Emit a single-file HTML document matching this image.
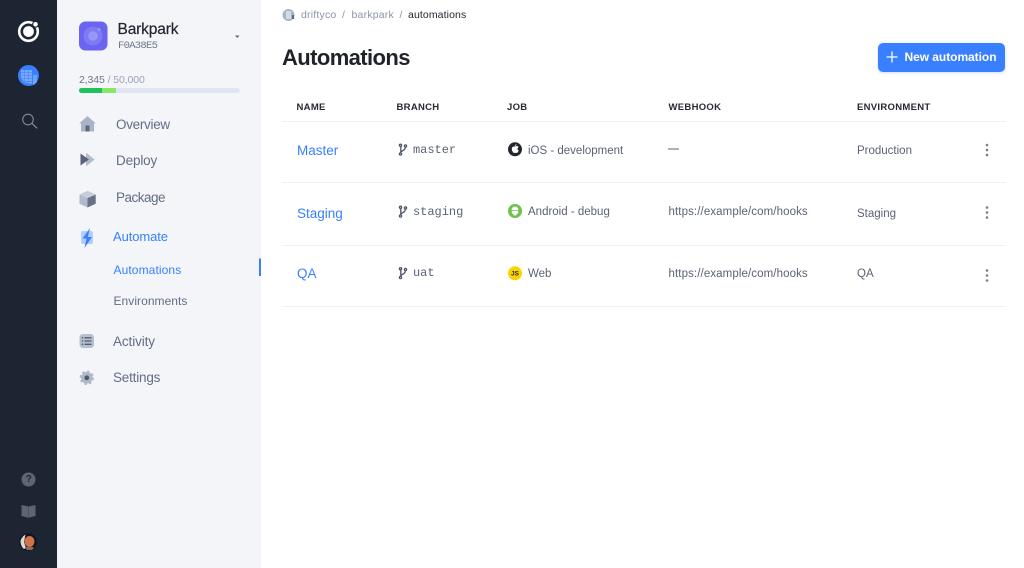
<!DOCTYPE html>
<html lang="en">
<head>
<meta charset="utf-8">
<title>Automations</title>
<style>
html,body{margin:0;padding:0;width:1024px;height:568px;overflow:hidden;background:#fff;font-family:"Liberation Sans",sans-serif;}
.t{position:absolute;white-space:nowrap;line-height:1;}
.a{position:absolute;}
.nav{font-size:13.5px;color:#646d85;}
.blue{color:#3880ff;}
.th{font-size:9.5px;font-weight:700;color:#272a33;letter-spacing:.3px;}
.nm{font-size:13.5px;color:#3880ff;letter-spacing:0;}
.td{font-size:11.5px;color:#5b6274;letter-spacing:0;}
.url{letter-spacing:.1px;}
.mono{font-family:"Liberation Mono",monospace;font-size:12px;color:#5b6274;letter-spacing:-.02px;}
.ln{position:absolute;left:282px;width:724px;height:1px;background:#eef0f6;}
</style>
</head>
<body>
<div class="a" style="left:0;top:0;width:57px;height:568px;background:#1e2532;"></div>
<div class="a" style="left:57px;top:0;width:204px;height:568px;background:#f3f5f9;"></div>

<svg class="a" style="left:0;top:0" width="261" height="568" viewBox="0 0 261 568">
  <!-- logo -->
  <circle cx="28.500" cy="31.500" r="9.300" fill="none" stroke="#fff" stroke-width="2.600"/>
  <circle cx="28.500" cy="31.500" r="5.400" fill="#fff"/>
  <circle cx="35.500" cy="24.300" r="3.400" fill="#1e2532"/>
  <circle cx="35.500" cy="24.300" r="2.300" fill="#fff"/>
  <!-- org -->
  <circle cx="28.500" cy="75.500" r="10.500" fill="#3880ff"/>
  <path d="M21 70h11v13.500a10.500 10.500 0 0 1-11-6z" fill="#76a9ff"/>
  <path d="M33 75h4v7l-2.500 2.500-1.500.5z" fill="#6ba3ff"/>
  <path d="M21.500 72.500h10.500M21.500 75.500h10.500M21.500 78.500h10.500M21.500 81.500h10.500M24.500 70v14M28.500 70v14" stroke="#4f8df5" stroke-width=".8"/>
  <!-- search -->
  <circle cx="28" cy="119.500" r="5.300" fill="none" stroke="#7f8899" stroke-width="1.100"/>
  <path d="M32 123.500l4.800 4.500" stroke="#7f8899" stroke-width="1.200" stroke-linecap="round"/>
  <!-- help -->
  <circle cx="28.500" cy="479.500" r="7" fill="#5d6472"/>
  <!-- book -->
  <path d="M21.500 505l7 1.500 7-1.500v11l-7 1.800-7-1.800z" fill="#5d6472"/>
  <path d="M28.500 506.500v11.300" stroke="#444b59" stroke-width=".6"/>
  <!-- avatar -->
  <circle cx="28" cy="542" r="8.800" fill="#10141c"/>
  <path d="M20.500 541c1-3 2.500-5 5-6.500l-1.500 7.500 2 6-2 1c-2.500-2-3.500-5-3.500-8z" fill="#dcdad8"/>
  <ellipse cx="29.500" cy="541.500" rx="5" ry="5.500" fill="#d0724a"/>
  <path d="M25 547.500c2-1 7-1 9 0l-2 2.500h-5z" fill="#8a6a60"/>

  <!-- app icon -->
  <rect x="79" y="21.500" width="28.500" height="29" rx="6.500" fill="#6a64f1"/>
  <circle cx="93" cy="36" r="9.500" fill="#7e79f5"/>
  <circle cx="93" cy="36" r="4.800" fill="#9a96f8"/>
  <circle cx="99" cy="29.500" r="1.500" fill="#9a96f8"/>
  <path d="M235 35.500h4.500l-2.250 2.500z" fill="#5f6675"/>

  <!-- progress -->
  <rect x="79" y="88" width="160.500" height="5" rx="2.500" fill="#dfe5f2"/>
  <path d="M116 88h-34.500a2.500 2.500 0 0 0 0 5H116z" fill="#86e866"/>
  <path d="M102 88H81.500a2.500 2.500 0 0 0 0 5H102z" fill="#1fc25a"/>

  <!-- overview -->
  <path d="M87.500 116l8.300 7.500h-1.800v8H81v-8h-1.800z" fill="#aab4c6"/>
  <rect x="85.500" y="125.500" width="4" height="6" fill="#5e6678"/>
  <!-- deploy -->
  <path d="M86 153h.5l8.200 6.500-8.200 6.500H86z" fill="#b4bdcd"/>
  <path d="M80.500 153.500l8.500 6-8.500 6z" fill="#5c6479"/>
  <!-- package -->
  <path d="M79.500 194.500l8 3.500v9.500l-8-3.700z" fill="#b0bacb"/>
  <path d="M87.500 198l8.200-3.500v9.300l-8.200 3.700z" fill="#687186"/>
  <path d="M79.500 194.500l8.200-3.700 8 3.700-8.200 3.500z" fill="#c5cdda"/>
  <!-- automate -->
  <rect x="81" y="231" width="12" height="13" rx="2" fill="#b2cefc"/>
  <path d="M90 228l-7.500 10.500h4L84.500 248l7.500-11h-4.200z" fill="#3880ff"/>
  <!-- activity -->
  <rect x="79.500" y="334" width="14.500" height="14" rx="3.500" fill="#b6bfcf"/>
  <path d="M84.500 337.800h7M84.500 341h7M84.500 344.300h7" stroke="#555d71" stroke-width="1.300"/>
  <path d="M81.700 337.800h1.500M81.700 341h1.500M81.700 344.300h1.500" stroke="#555d71" stroke-width="1.300"/>
  <!-- settings -->
  <circle cx="86.800" cy="377.800" r="6.300" fill="none" stroke="#aeb8c9" stroke-width="1.800" stroke-dasharray="2.500 2.450"/>
  <circle cx="86.800" cy="377.800" r="5.800" fill="#aeb8c9"/>
  <circle cx="86.800" cy="377.800" r="2.400" fill="#4f5769"/>
  <!-- active bar -->
  <rect x="259" y="258.500" width="2" height="17.500" fill="#3880ff"/>
</svg>

<div class="t" style="left:117.500px;top:22px;font-size:15.500px;color:#23262f;letter-spacing:-.15px;-webkit-text-stroke:.2px #23262f;">Barkpark</div>
<div class="t" style="left:118px;top:40.500px;font-family:'Liberation Mono',monospace;font-size:10.500px;color:#6f7789;letter-spacing:-.7px;">F0A38E5</div>
<div class="t" style="left:79px;top:74.500px;font-size:10.500px;color:#9aa2b3;letter-spacing:-.1px;"><span style="color:#6f7789">2,345</span> / 50,000</div>

<div class="t nav" style="left:116px;top:118px;letter-spacing:-.3px;">Overview</div>
<div class="t nav" style="left:116px;top:154px;letter-spacing:-.15px;">Deploy</div>
<div class="t nav" style="left:116px;top:191px;letter-spacing:-.5px;">Package</div>
<div class="t nav blue" style="left:113px;top:230px;font-size:13px;letter-spacing:-.1px;">Automate</div>
<div class="t blue" style="left:113.500px;top:263.500px;font-size:12px;letter-spacing:.1px;">Automations</div>
<div class="t" style="left:113.500px;top:295px;font-size:12px;color:#646d85;letter-spacing:.05px;">Environments</div>
<div class="t nav" style="left:113px;top:335px;letter-spacing:-.1px;">Activity</div>
<div class="t nav" style="left:113px;top:371px;letter-spacing:-.2px;">Settings</div>

<!-- help mark -->
<div class="t" style="left:25.700px;top:474.500px;font-size:10px;font-weight:700;color:#1e2532;">?</div>

<!-- breadcrumb -->
<svg class="a" style="left:282px;top:8px" width="14" height="14" viewBox="0 0 14 14">
  <circle cx="6.500" cy="7" r="6" fill="#a9b4c8"/>
  <rect x="4" y="3" width="5" height="8" fill="#d4dae6"/>
  <rect x="10" y="7" width="2" height="4" fill="#5d6579"/>
</svg>
<div class="t" style="left:301px;top:9.500px;font-size:10.500px;color:#8c94a8;letter-spacing:.2px;">driftyco</div>
<div class="t" style="left:342px;top:9.500px;font-size:10.500px;color:#8c94a8;">/</div>
<div class="t" style="left:351.500px;top:9.500px;font-size:10.500px;color:#8c94a8;letter-spacing:.2px;">barkpark</div>
<div class="t" style="left:399.500px;top:9.500px;font-size:10.500px;color:#8c94a8;">/</div>
<div class="t" style="left:408px;top:9.500px;font-size:10.500px;color:#23262f;letter-spacing:.1px;">automations</div>

<div class="t" style="left:282px;top:47px;font-size:22px;font-weight:700;color:#1f2229;letter-spacing:-.6px;">Automations</div>

<!-- button -->
<div class="a" style="left:878px;top:42.500px;width:127px;height:29px;border-radius:5px;background:#3880ff;box-shadow:0 1px 3px rgba(56,128,255,.25);"></div>
<svg class="a" style="left:886px;top:51px" width="12" height="12" viewBox="0 0 12 12"><path d="M6 .5v11M.5 6h11" stroke="#fff" stroke-width="1.300"/></svg>
<div class="t" style="left:904.500px;top:51px;font-size:12px;font-weight:700;color:#fff;letter-spacing:-.05px;">New automation</div>

<!-- table head -->
<div class="t th" style="left:296.500px;top:102.500px;">NAME</div>
<div class="t th" style="left:396.500px;top:102.500px;">BRANCH</div>
<div class="t th" style="left:507px;top:102.500px;">JOB</div>
<div class="t th" style="left:668.500px;top:102.500px;">WEBHOOK</div>
<div class="t th" style="left:857px;top:102.500px;">ENVIRONMENT</div>
<div class="ln" style="top:120.500px;"></div>
<div class="ln" style="top:182px;"></div>
<div class="ln" style="top:245px;"></div>
<div class="ln" style="top:305.500px;"></div>

<!-- row 1 -->
<div class="t nm" style="left:297px;top:144px;">Master</div>
<div class="t mono" style="left:413px;top:143.500px;">master</div>
<svg class="a" style="left:505px;top:139px" width="20" height="20" viewBox="0 0 20 20">
  <circle cx="10" cy="10.300" r="7" fill="#23262f"/>
  <path d="M10 7.500c1-.6 2.800-.8 3.500.6-1.500 1-1.200 2.800.2 3.400-.5 1.300-1.400 2.700-2.300 2.500-.7-.2-1-.3-1.500-.1-1 .4-1.900-.4-2.600-1.900-.8-1.800-.5-3.800.9-4.400.7-.3 1.300 0 1.800-.1zM10 7c0-1 .7-1.800 1.500-1.900 0 1-.6 1.800-1.500 1.900z" fill="#fff"/>
</svg>
<div class="t td" style="left:528px;top:145.500px;">iOS - development</div>
<div class="a" style="left:668px;top:148px;width:10.500px;height:2px;background:#aab2c2;"></div>
<div class="t td" style="left:857px;top:145.500px;">Production</div>

<!-- row 2 -->
<div class="t nm" style="left:297px;top:206.500px;">Staging</div>
<div class="t mono" style="left:413px;top:205.500px;">staging</div>
<svg class="a" style="left:505px;top:201px" width="20" height="20" viewBox="0 0 20 20">
  <circle cx="10" cy="10" r="7" fill="#6cc24a"/>
  <path d="M6.500 9a3.500 3.500 0 0 1 7 0z" fill="#fff"/>
  <path d="M6.800 9.700h6.400v2.500l-1.700 1v1.200h-3v-1.200l-1.700-1z" fill="#fff"/>
</svg>
<div class="t td" style="left:528px;top:207px;">Android - debug</div>
<div class="t td url" style="left:668.500px;top:207px;">https://example/com/hooks</div>
<div class="t td" style="left:857px;top:209px;">Staging</div>

<!-- row 3 -->
<div class="t nm" style="left:297px;top:266.500px;">QA</div>
<div class="t mono" style="left:413px;top:267px;">uat</div>
<svg class="a" style="left:505px;top:262.500px" width="20" height="20" viewBox="0 0 20 20">
  <circle cx="10" cy="10.300" r="7" fill="#fbd400"/>
  <text x="10" y="12.600" font-family="Liberation Sans" font-size="6.500" font-weight="700" text-anchor="middle" fill="#23262f">JS</text>
</svg>
<div class="t td" style="left:528px;top:268.500px;">Web</div>
<div class="t td url" style="left:668.500px;top:268.500px;">https://example/com/hooks</div>
<div class="t td" style="left:857px;top:268.500px;">QA</div>

<!-- branch icons + kebabs -->
<svg class="a" style="left:0;top:0" width="1024" height="568" viewBox="0 0 1024 568">
  <g fill="none" stroke="#4d5466" stroke-width="1.300">
    <circle cx="400.500" cy="145.300" r="1.100"/>
    <circle cx="405.500" cy="146" r="1.100"/>
    <circle cx="400.500" cy="154" r="1.100"/>
    <path d="M400.800 146.500v6.500M405.300 147.200c0 2.600-2 3.300-4.500 4.600"/>
  </g>
  <g fill="none" stroke="#4d5466" stroke-width="1.300" transform="translate(0 62)">
    <circle cx="400.500" cy="145.300" r="1.100"/>
    <circle cx="405.500" cy="146" r="1.100"/>
    <circle cx="400.500" cy="154" r="1.100"/>
    <path d="M400.800 146.500v6.500M405.300 147.200c0 2.600-2 3.300-4.500 4.600"/>
  </g>
  <g fill="none" stroke="#4d5466" stroke-width="1.300" transform="translate(0 123.500)">
    <circle cx="400.500" cy="145.300" r="1.100"/>
    <circle cx="405.500" cy="146" r="1.100"/>
    <circle cx="400.500" cy="154" r="1.100"/>
    <path d="M400.800 146.500v6.500M405.300 147.200c0 2.600-2 3.300-4.500 4.600"/>
  </g>
  <g fill="#757d90">
    <circle cx="987" cy="145" r="1.300"/><circle cx="987" cy="150" r="1.300"/><circle cx="987" cy="155" r="1.300"/>
    <circle cx="987" cy="207.500" r="1.300"/><circle cx="987" cy="212.500" r="1.300"/><circle cx="987" cy="217.500" r="1.300"/>
    <circle cx="987" cy="270.500" r="1.300"/><circle cx="987" cy="275.500" r="1.300"/><circle cx="987" cy="280.500" r="1.300"/>
  </g>
</svg>
</body>
</html>
